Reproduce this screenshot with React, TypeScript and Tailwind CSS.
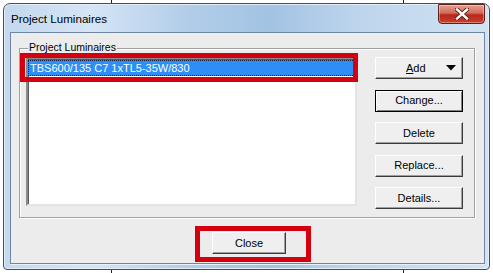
import { ReactNode } from "react";

function Btn({
  children,
  def = false,
  className = "",
}: {
  children: ReactNode;
  def?: boolean;
  className?: string;
}) {
  const edge = def
    ? "border border-black shadow-[inset_1px_1px_0_#ffffff,inset_-1px_-1px_0_#808080]"
    : "border border-t-white border-l-white border-r-[#3c3c3c] border-b-[#3c3c3c] shadow-[inset_-1px_-1px_0_#a0a0a0]";
  return (
    <div
      className={`h-[22px] bg-[#efefef] flex items-center text-[11px] text-black leading-none ${edge} ${className}`}
    >
      {children}
    </div>
  );
}

export default function App() {
  return (
    <div className="relative w-[493px] h-[273px] bg-white overflow-hidden pt-[3px] pl-[3px] font-['Liberation_Sans',Arial,sans-serif]">
      {/* desktop lines behind the dialog */}
      <div className="absolute left-[111px] top-0 w-px h-full bg-[#222]" />
      <div className="absolute left-[403px] top-0 w-px h-full bg-[#222]" />

      <div className="relative w-[487px] h-[267px] rounded-t-[7px] rounded-b-[4px] border border-[#3e5068] shadow-[inset_0_0_0_1px_#e4eef9] bg-[linear-gradient(90deg,#c3d8ee_0%,#d5e5f5_18%,#b2cde9_38%,#a3c3e4_55%,#bcd4ec_72%,#d2e3f3_100%)]">
        {/* title bar */}
        <div className="h-[28px] flex items-start">
          <span className="pl-[7px] pt-[8px] text-[11.6px] leading-[14px] text-black">
            Project Luminaires
          </span>
          <div className="ml-auto mr-[4px] w-[47px] h-[20px] rounded-b-[4px] border border-[#5b2320] bg-[linear-gradient(180deg,#e6a193_0%,#d16a58_45%,#b8281c_55%,#c9402c_100%)] shadow-[inset_0_0_0_1px_rgba(255,255,255,0.35)] flex items-center justify-center">
            <svg width="14" height="12" viewBox="0 0 14 12">
              <path
                d="M2 1.5 L12 10.5 M12 1.5 L2 10.5"
                stroke="#5a1d18"
                strokeWidth="4.2"
                strokeLinecap="square"
              />
              <path
                d="M2 1.5 L12 10.5 M12 1.5 L2 10.5"
                stroke="#ffffff"
                strokeWidth="2.4"
                strokeLinecap="square"
              />
            </svg>
          </div>
        </div>

        {/* client area */}
        <div className="ml-[6px] w-[475px] h-[232px] border border-[#6f87a3] shadow-[0_1px_0_#e8f0f9] bg-[#ececec] pt-[15px]">
          {/* group box */}
          <div className="relative ml-[8px] w-[456px] h-[170px] border border-[#a0a0a0] shadow-[inset_1px_1px_0_#ffffff,1px_1px_0_#ffffff] pt-[8px] pl-[6px] flex">
            <span className="absolute left-[8px] top-[-8px] px-px bg-[#ececec] text-[10.5px] leading-[13px] text-black">
              Project Luminaires
            </span>

            {/* list box */}
            <div className="w-[331px] h-[149px] bg-white border-2 border-t-[#8a8a8a] border-l-[#8a8a8a] border-r-[#e3e3e3] border-b-[#e3e3e3] shadow-[inset_1px_1px_0_#5a5a5a]">
              <div className="h-[16px] mt-px bg-[#2e8ef5] border border-dotted border-[#0b1c3d] flex items-center pl-[1px] text-[11px] leading-none text-white">
                TBS600/135 C7 1xTL5-35W/830
              </div>
            </div>

            {/* buttons */}
            <div className="ml-[18px] w-[88px] flex flex-col gap-[10.5px]">
              <Btn>
                <span className="ml-[30px]">
                  <span className="underline underline-offset-1">A</span>dd
                </span>
                <svg className="ml-auto mr-[6px]" width="10" height="6" viewBox="0 0 10 6">
                  <path d="M0 0 L10 0 L5 5.5 Z" fill="#000" />
                </svg>
              </Btn>
              <Btn def className="justify-center">
                Change...
              </Btn>
              <Btn className="justify-center">Delete</Btn>
              <Btn className="justify-center">Replace...</Btn>
              <Btn className="justify-center">Details...</Btn>
            </div>
          </div>

          {/* close */}
          <div className="mt-[14px] pl-[201px]">
            <Btn className="w-[74px] justify-center">Close</Btn>
          </div>
        </div>
      </div>

      {/* red annotation boxes */}
      <div className="absolute left-[20px] top-[53px] w-[338px] h-[29px] border-[5px] border-[#d40010]" />
      <div className="absolute left-[195px] top-[226px] w-[116px] h-[36px] border-[5px] border-[#d40010]" />
    </div>
  );
}
